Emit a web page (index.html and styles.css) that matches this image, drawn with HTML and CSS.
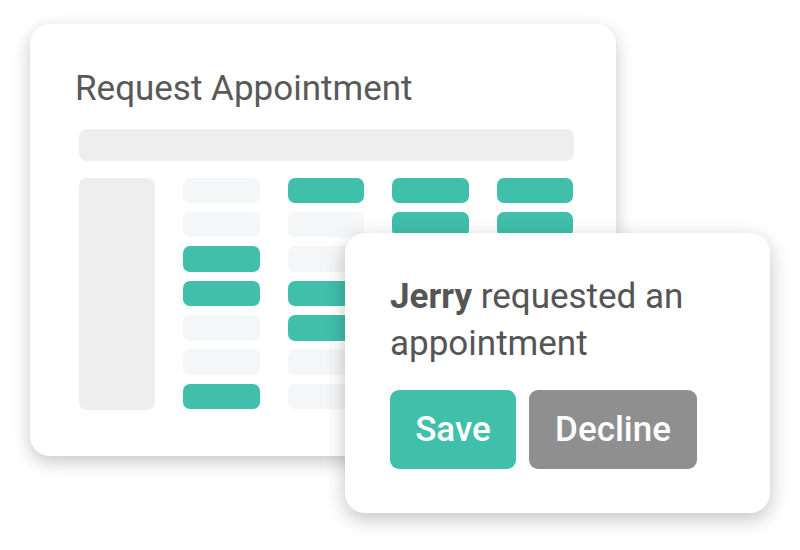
FILE: index.html
```html
<!DOCTYPE html>
<html>
<head>
<meta charset="utf-8">
<link rel="stylesheet" href="styles.css">
</head>
<body>
<div class="stage">
  <section class="card main">
    <h1 class="title">Request Appointment</h1>
    <div class="bar"></div>
    <div class="grid">
      <div class="side"></div>
      <div class="col">
        <span class="pill"></span><span class="pill"></span><span class="pill on"></span><span class="pill on"></span><span class="pill"></span><span class="pill"></span><span class="pill on"></span>
      </div>
      <div class="col">
        <span class="pill on"></span><span class="pill"></span><span class="pill"></span><span class="pill on"></span><span class="pill on"></span><span class="pill"></span><span class="pill"></span>
      </div>
      <div class="col">
        <span class="pill on"></span><span class="pill on"></span><span class="pill"></span><span class="pill"></span><span class="pill on"></span><span class="pill"></span><span class="pill"></span>
      </div>
      <div class="col">
        <span class="pill on"></span><span class="pill on"></span><span class="pill"></span><span class="pill on"></span><span class="pill"></span><span class="pill"></span><span class="pill"></span>
      </div>
    </div>
  </section>
  <section class="card popup">
    <p class="msg"><strong>Jerry</strong> requested an appointment</p>
    <div class="actions">
      <button class="btn save">Save</button>
      <button class="btn decline">Decline</button>
    </div>
  </section>
</div>
</body>
</html>
```
FILE: styles.css
```css
* { box-sizing: border-box; }
html, body { margin: 0; padding: 0; background: #ffffff; }
body { font-family: Roboto, "Liberation Sans", sans-serif; }
.stage { position: relative; width: 800px; height: 550px; overflow: hidden; padding: 24px 0 0 30px; }
.card { background: #ffffff; border-radius: 20px; }
.main {
  width: 586px; height: 432px;
  padding: 46.5px 0 0 47px;
  box-shadow: 0 6px 18px rgba(0,0,0,0.22);
}
.title {
  margin: 0 0 0 -2px; font-size: 35px; line-height: 35px; font-weight: 400;
  color: #595959; letter-spacing: 0;
}
.bar {
  margin: 23.5px 0 0 1.5px; width: 495px; height: 31.5px;
  background: #eeeeee; border-radius: 8px;
}
.grid {
  margin: 17px 0 0 1.5px;
  display: grid;
  grid-template-columns: repeat(5, 76.5px);
  column-gap: 28px;
}
.side { height: 232px; background: #eeeeee; border-radius: 8px; }
.col { display: flex; flex-direction: column; gap: 8.9px; }
.pill { display: block; height: 25.5px; border-radius: 7px; background: #f5f6f8; }
.pill.on { background: #40bfaa; }
.popup {
  position: absolute; left: 345px; top: 233px;
  width: 425px; height: 280px;
  padding: 39.5px 0 0 45px;
  box-shadow: 0 6px 20px rgba(0,0,0,0.24);
}
.msg {
  margin: 0; font-size: 35px; line-height: 47px; color: #555555;
  width: 330px;
}
.msg strong { font-weight: 700; }
.actions { display: flex; gap: 13px; margin-top: 23.5px; }
.btn {
  border: 0; height: 79px; border-radius: 9px; color: #ffffff;
  font-family: Roboto, "Liberation Sans", sans-serif;
  font-size: 35px; font-weight: 500; padding: 0;
}
.save { width: 126px; background: #40bfaa; }
.decline { width: 168px; background: #8f8f8f; }
```
